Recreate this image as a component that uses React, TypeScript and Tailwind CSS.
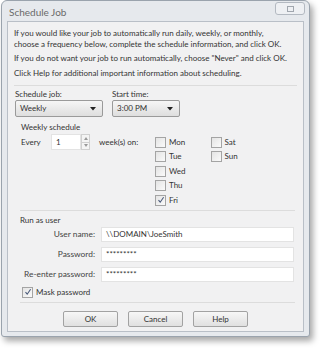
import React from 'react';

const font = { fontFamily: 'Lato, "Open Sans", sans-serif' };

function Check({ label, checked }: { label: string; checked?: boolean }) {
    return (
        <div className="flex items-center gap-[3px] h-[14px]">
            <span className="w-[11px] h-[11px] border border-[#a4a4a4] bg-gradient-to-br from-[#e4e4e4] to-[#fafafa] flex items-center justify-center">
                {checked && (
                    <svg width="8" height="8" viewBox="0 0 8 8">
                        <path d="M1.5 4.2 L3.2 6.2 L6.6 1.2" stroke="#4a5a7a" strokeWidth="1.1" fill="none" />
                    </svg>
                )}
            </span>
            <span>{label}</span>
        </div>
    );
}

function Select({ value, width }: { value: string; width: string }) {
    return (
        <div className={`${width} h-[17px] border border-[#9a9a9a] rounded-[2px] bg-gradient-to-b from-[#f6f6f6] to-[#dedede] flex items-center justify-between pl-[4px] pr-[6px]`}>
            <span>{value}</span>
            <svg width="6" height="4" viewBox="0 0 6 4">
                <path d="M0 0 H6 L3 3.5 Z" fill="#222" />
            </svg>
        </div>
    );
}

function Field({ label, value }: { label: string; value: string }) {
    return (
        <div className="flex items-center h-[15px]">
            <span className="w-[87px] text-right pr-[6px] text-[8.4px] text-[#444]">{label}</span>
            <div className="w-[193px] h-[15px] bg-white border border-[#e3e3e3] flex items-center pl-[4px]">{value}</div>
        </div>
    );
}

export default function App() {
    return (
        <div className="w-[323px] h-[349px] bg-white" style={font}>
            <div className="ml-[1px] w-[309px] h-[337px] rounded-t-[6px] rounded-b-[3px] border border-[#9aa3ad] bg-[#e6e9ed] shadow-[3px_4px_6px_rgba(0,0,0,0.35)] flex flex-col px-[5px] pb-[4px]">
                <div className="h-[20px] flex items-start justify-between">
                    <span className="text-[10px] text-[#6a6a6a] mt-[4px] ml-[2px]">Schedule Job</span>
                    <div className="mt-[1px] mr-[-1px] w-[30px] h-[13px] border border-[#b3b9c1] rounded-[3px] bg-[#eef0f3] flex items-center justify-center">
                        <span className="w-[7px] h-[6px] border border-[#a0a6ae]"></span>
                    </div>
                </div>
                <div className="flex-1 border border-[#b9bfc7] bg-[#f1f1f2] px-[6px] pt-[6px] text-[8px] leading-[11px] text-[#333]">
                    <p className="whitespace-nowrap">
                        If you would like your job to automatically run daily, weekly, or monthly,
                        <br />
                        choose a frequency below, complete the schedule information, and click OK.
                    </p>
                    <p className="mt-[3px]">If you do not want your job to run automatically, choose "Never" and click OK.</p>
                    <p className="mt-[4px]">Click Help for additional important information about scheduling.</p>
                    <div className="mt-[6px] border-t border-[#dcdcdc]"></div>

                    <div className="flex gap-[9px] mt-[3px] ml-[1px]">
                        <div>
                            <div>Schedule job:</div>
                            <Select value="Weekly" width="w-[88px]" />
                        </div>
                        <div>
                            <div>Start time:</div>
                            <Select value="3:00 PM" width="w-[68px]" />
                        </div>
                    </div>

                    <div className="ml-[7px] mt-[5px] w-[272px]">
                        <div>Weekly schedule</div>
                        <div className="flex mt-[1px]">
                            <div className="flex items-start">
                                <span className="mt-[3px] w-[30px]">Every</span>
                                <div className="flex h-[16px]">
                                    <div className="w-[30px] bg-white border border-[#e3e3e3] pl-[4px] flex items-center">1</div>
                                    <div className="w-[9px] flex flex-col border border-[#d0d0d0]">
                                        <div className="flex-1 flex items-center justify-center bg-[#f4f4f4] border-b border-[#d0d0d0]">
                                            <svg width="4" height="3" viewBox="0 0 4 3"><path d="M0 3 H4 L2 0 Z" fill="#999" /></svg>
                                        </div>
                                        <div className="flex-1 flex items-center justify-center bg-[#f4f4f4]">
                                            <svg width="4" height="3" viewBox="0 0 4 3"><path d="M0 0 H4 L2 3 Z" fill="#999" /></svg>
                                        </div>
                                    </div>
                                </div>
                                <span className="mt-[3px] ml-[9px] w-[56px]">week(s) on:</span>
                            </div>
                            <div className="flex flex-col gap-[0.5px] mt-[1px]">
                                <Check label="Mon" />
                                <Check label="Tue" />
                                <Check label="Wed" />
                                <Check label="Thu" />
                                <Check label="Fri" checked />
                            </div>
                            <div className="flex flex-col gap-[0.5px] mt-[1px] ml-[25px]">
                                <Check label="Sat" />
                                <Check label="Sun" />
                            </div>
                        </div>
                    </div>

                    <div className="ml-[6px] mt-[3px] w-[275px] border-t border-[#dcdcdc]"></div>
                    <div className="ml-[6px] mt-[4px]">Run as user</div>
                    <div className="flex flex-col gap-[5px] mt-[1px]">
                        <Field label="User name:" value="\\DOMAIN\JoeSmith" />
                        <Field label="Password:" value="*********" />
                        <Field label="Re-enter password:" value="*********" />
                    </div>
                    <div className="ml-[8px] mt-[3px]">
                        <Check label="Mask password" checked />
                    </div>
                    <div className="ml-[6px] mt-[3px] w-[275px] border-t border-[#dcdcdc]"></div>
                    <div className="flex justify-center gap-[10px] mt-[8px]">
                        {['OK', 'Cancel', 'Help'].map((b) => (
                            <div key={b} className="w-[55px] h-[16px] border border-[#a2a2a2] rounded-[2px] bg-gradient-to-b from-[#f7f7f7] to-[#e0e0e0] flex items-center justify-center">
                                {b}
                            </div>
                        ))}
                    </div>
                </div>
            </div>
        </div>
    );
}
